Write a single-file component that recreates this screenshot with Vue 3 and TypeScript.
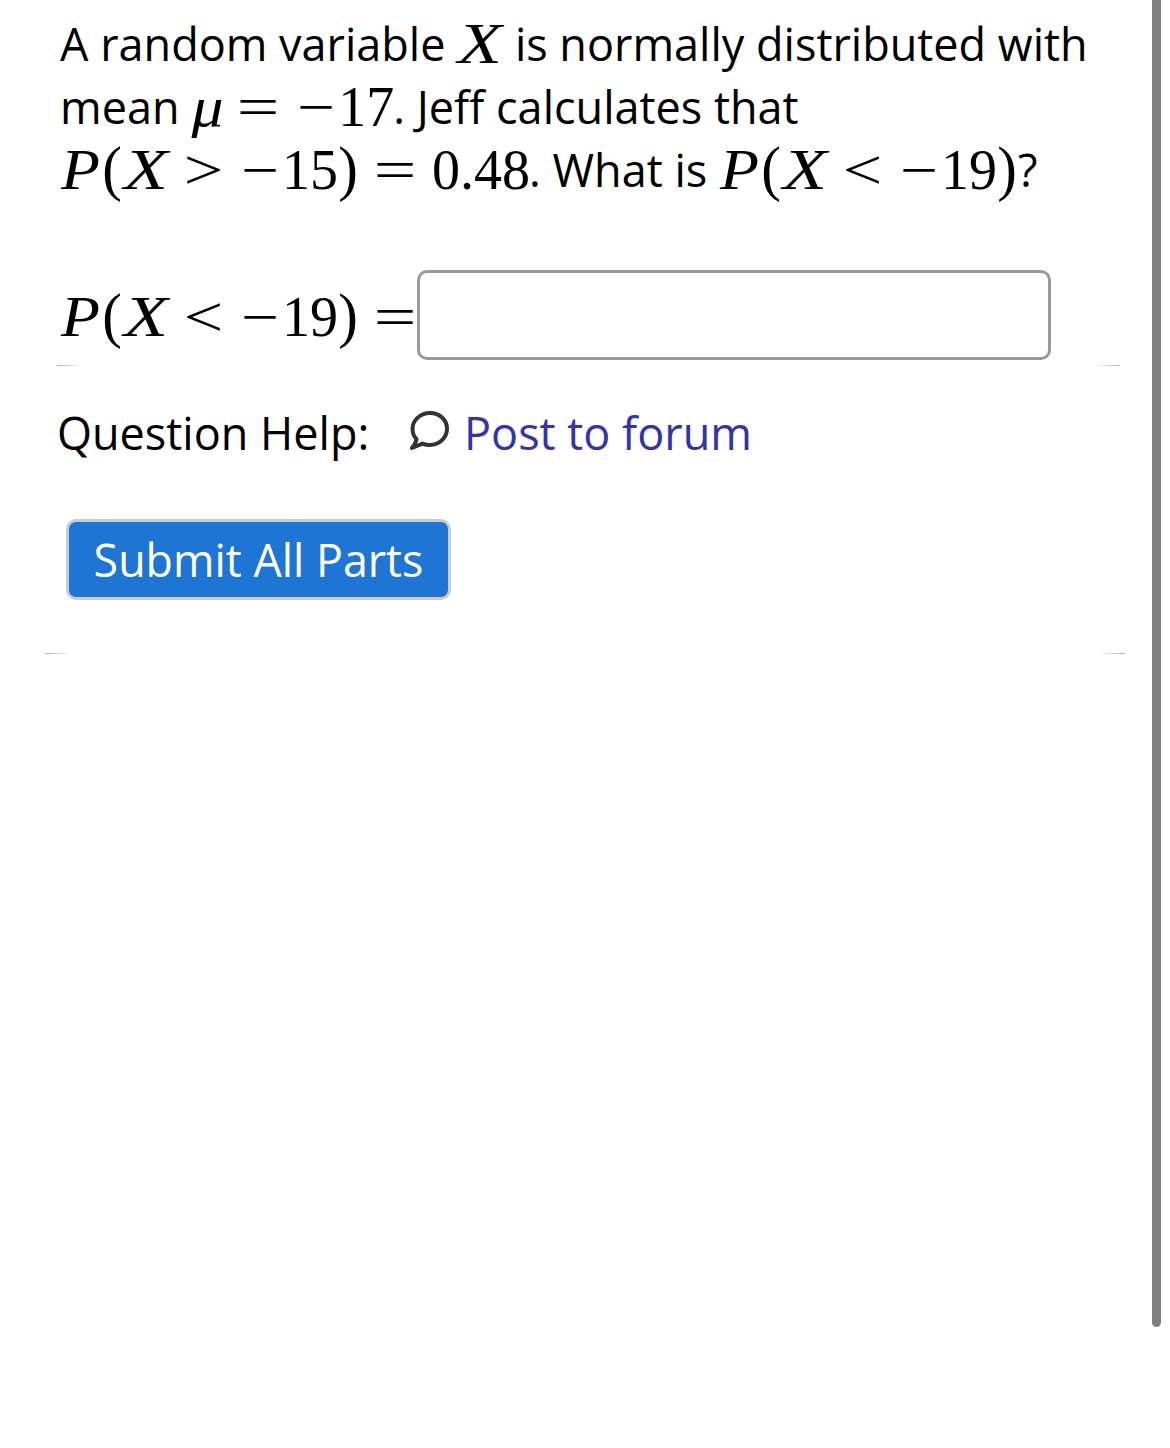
<script setup lang="ts">
</script>

<template>
  <main class="page">
    <div class="scrollbar"></div>
    <section class="outer">
      <section class="inner">
        <p class="question">
          A random variable <span class="m v-x">X</span> is normally distributed with<br />
          mean <span class="m v-mu">μ</span><span class="m op eq">=</span><span class="m minus">−</span><span class="m num">17</span>. Jeff calculates that<br />
          <span class="m v-p">P</span><span class="m paren">(</span><span class="m v-x">X</span><span class="m op cmp">&gt;</span><span class="m minus">−</span><span class="m num">15</span><span class="m paren">)</span><span class="m op eq">=</span><span class="m num">0.48</span>. What is <span class="m v-p">P</span><span class="m paren">(</span><span class="m v-x">X</span><span class="m op cmp">&lt;</span><span class="m minus">−</span><span class="m num">19</span><span class="m paren">)</span>?
        </p>
        <div class="answer">
          <span class="expr"><span class="m v-p">P</span><span class="m paren">(</span><span class="m v-x">X</span><span class="m op cmp">&lt;</span><span class="m minus">−</span><span class="m num">19</span><span class="m paren">)</span><span class="m op eq tail">=</span></span>
          <input class="field" type="text" aria-label="Answer" />
        </div>
        <div class="fades"><i class="fade left"></i><i class="fade right"></i></div>
        <div class="help">
          <span class="label">Question Help:</span>
          <svg class="bubble" viewBox="0 0 40 40" aria-hidden="true">
            <path d="M3 38 C6 36.8 10 35 13.5 33.6 C16 34.6 18.5 35 21 35 C30.5 35 38 27.5 38 18.8 C38 9.8 30.5 3 21 3 C11.5 3 3.5 10 3.5 19 C3.5 23 5 26.5 7.5 29.2 C7 32 5.5 35.5 3 38 Z" fill="none" stroke="#333" stroke-width="4" stroke-linejoin="round" />
          </svg>
          <a class="link" href="#">Post to forum</a>
        </div>
        <button class="submit" type="button">Submit All Parts</button>
      </section>
      <div class="fades wide"><i class="fade left"></i><i class="fade right"></i></div>
    </section>
  </main>
</template>

<style>
html, body { margin: 0; background: #fff; }
</style>

<style scoped>
.page {
  position: relative;
  height: 1448px;
  overflow: hidden;
  background: #fff;
  color: #000;
  font-family: "Open Sans", sans-serif;
  font-size: 45px;
}
.scrollbar {
  position: absolute;
  left: 1152px;
  top: 0;
  width: 9px;
  height: 1327px;
  background: #808080;
  border-radius: 0 0 5px 5px;
}
.outer {
  width: 1080px;
  margin-left: 45px;
}
.inner {
  padding: 12px 5px 0 12px;
}
.question {
  margin: 0;
  padding-left: 3px;
  line-height: 63px;
  white-space: nowrap;
}
.question .m { vertical-align: -2px; }
.m {
  display: inline-block;
  font-family: "Liberation Serif", serif;
  font-size: 56px;
  line-height: 40px;
  text-align: center;
  white-space: nowrap;
}
.v-x, .v-p, .v-mu { font-style: italic; font-size: 58px; }
.v-x { width: 46px; transform: scaleX(1.25); }
.v-p { width: 41px; transform: scaleX(1.1); }
.v-mu { width: 29px; margin-left: 2px; transform: scaleX(1.1); }
.paren { width: 22px; font-size: 62px; transform: scaleX(0.95); }
.op { margin: 0 16px; width: 37px; }
.eq { width: 40px; transform: scaleX(1.35); }
.cmp { transform: scaleX(1.25); }
.op.tail { margin-right: 2px; }
.minus { width: 42px; margin-left: 1px; transform: scaleX(1.2); }
.num { margin-left: 1px; margin-right: -1px; }
.answer {
  display: flex;
  align-items: flex-start;
  height: 90px;
  margin-top: 69px;
  padding-left: 3px;
  white-space: nowrap;
}
.expr {
  display: flex;
  align-items: baseline;
  padding-top: 25px;
}
.field {
  box-sizing: border-box;
  flex: none;
  width: 634px;
  height: 90px;
  border: 3px solid #999;
  border-radius: 10px;
  background: #fff;
  outline: none;
}
.fades {
  display: flex;
  justify-content: space-between;
  height: 1px;
  margin-top: 5px;
}
.fade {
  display: block;
  width: 26px;
  height: 1px;
}
.fade.left { background: linear-gradient(to right, #aaa, #fff); }
.fade.right { background: linear-gradient(to left, #aaa, #fff); }
.help {
  display: flex;
  align-items: center;
  height: 64px;
  margin-top: 34px;
}
.label { width: 352px; }
.bubble { width: 40px; height: 40px; margin: 0 15px 4px 0; }
.link { color: #3333aa; text-decoration: none; }
.submit {
  display: block;
  box-sizing: border-box;
  width: 385px;
  height: 81px;
  margin: 55px 0 0 9px;
  padding: 0;
  border: 3px solid #ccc;
  border-radius: 10px;
  background: #1f75d3;
  color: #fff;
  font: 44.8px "Open Sans", sans-serif;
}
.fades.wide { margin-top: 53px; }
</style>
